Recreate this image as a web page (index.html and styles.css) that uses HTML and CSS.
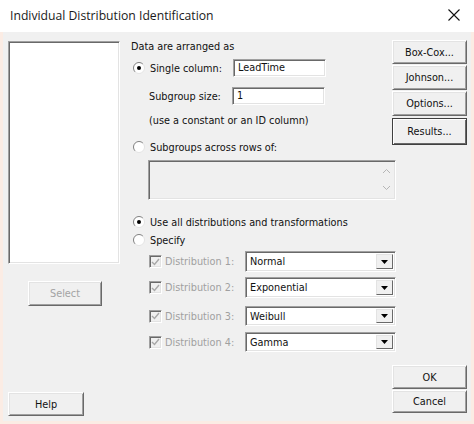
FILE: index.html
```html
<!DOCTYPE html>
<html>
<head>
<meta charset="utf-8">
<link rel="stylesheet" href="styles.css">
</head>
<body>
<div class="window">
  <div class="titlebar">
    <span class="title">Individual Distribution Identification</span>
    <svg class="close" width="12" height="12" viewBox="0 0 12 12"><path d="M0.5 0.5 L11.5 11.5 M11.5 0.5 L0.5 11.5" stroke="#111" stroke-width="1.1" fill="none"/></svg>
  </div>
  <div class="body">
    <div class="col-left">
      <div class="listbox"></div>
      <div class="btn btn-select disabled">Select</div>
      <div class="spacer"></div>
      <div class="btn btn-help">Help</div>
    </div>
    <div class="col-mid">
      <div class="line r-data">Data are arranged as</div>
      <div class="row r-single">
        <svg class="radio" width="12" height="12" viewBox="0 0 12 12"><circle cx="6" cy="6" r="5.5" fill="#fff"/><path d="M2.1 9.9 A5.5 5.5 0 0 1 9.9 2.1" stroke="#808080" fill="none"/><path d="M9.9 2.1 A5.5 5.5 0 0 1 2.1 9.9" stroke="#e3e3e3" fill="none"/><circle cx="6" cy="6" r="2" fill="#000"/></svg>
        <span class="lbl">Single column:</span>
        <div class="edit">LeadTime</div>
      </div>
      <div class="row r-sub">
        <span class="lbl ind">Subgroup size:</span>
        <div class="edit">1</div>
      </div>
      <div class="line ind r-use">(use a constant or an ID column)</div>
      <div class="row r-across">
        <svg class="radio" width="12" height="12" viewBox="0 0 12 12"><circle cx="6" cy="6" r="5.5" fill="#fff"/><path d="M2.1 9.9 A5.5 5.5 0 0 1 9.9 2.1" stroke="#808080" fill="none"/><path d="M9.9 2.1 A5.5 5.5 0 0 1 2.1 9.9" stroke="#e3e3e3" fill="none"/></svg>
        <span>Subgroups across rows of:</span>
      </div>
      <div class="textarea">
        <div class="scroll">
          <svg width="9" height="6" viewBox="0 0 9 6"><path d="M1 5 L4.5 1.5 L8 5" stroke="#b5b5b5" fill="none"/></svg>
          <svg width="9" height="6" viewBox="0 0 9 6"><path d="M1 1 L4.5 4.5 L8 1" stroke="#b5b5b5" fill="none"/></svg>
        </div>
      </div>
      <div class="row r-all">
        <svg class="radio" width="12" height="12" viewBox="0 0 12 12"><circle cx="6" cy="6" r="5.5" fill="#fff"/><path d="M2.1 9.9 A5.5 5.5 0 0 1 9.9 2.1" stroke="#808080" fill="none"/><path d="M9.9 2.1 A5.5 5.5 0 0 1 2.1 9.9" stroke="#e3e3e3" fill="none"/><circle cx="6" cy="6" r="2" fill="#000"/></svg>
        <span>Use all distributions and transformations</span>
      </div>
      <div class="row r-spec">
        <svg class="radio" width="12" height="12" viewBox="0 0 12 12"><circle cx="6" cy="6" r="5.5" fill="#fff"/><path d="M2.1 9.9 A5.5 5.5 0 0 1 9.9 2.1" stroke="#808080" fill="none"/><path d="M9.9 2.1 A5.5 5.5 0 0 1 2.1 9.9" stroke="#e3e3e3" fill="none"/></svg>
        <span>Specify</span>
      </div>
      <div class="row dist d1">
        <span class="check"><svg width="9" height="8" viewBox="0 0 9 8"><path d="M1 4 L3.5 6.5 L8 1" stroke="#a8a8a8" stroke-width="1.4" fill="none"/></svg></span>
        <span class="dlbl">Distribution 1:</span>
        <div class="combo"><span class="cval">Normal</span><span class="cbtn"><svg width="7" height="4" viewBox="0 0 7 4"><path d="M0 0 H7 L3.5 4 Z" fill="#000"/></svg></span></div>
      </div>
      <div class="row dist d2">
        <span class="check"><svg width="9" height="8" viewBox="0 0 9 8"><path d="M1 4 L3.5 6.5 L8 1" stroke="#a8a8a8" stroke-width="1.4" fill="none"/></svg></span>
        <span class="dlbl">Distribution 2:</span>
        <div class="combo"><span class="cval">Exponential</span><span class="cbtn"><svg width="7" height="4" viewBox="0 0 7 4"><path d="M0 0 H7 L3.5 4 Z" fill="#000"/></svg></span></div>
      </div>
      <div class="row dist d3">
        <span class="check"><svg width="9" height="8" viewBox="0 0 9 8"><path d="M1 4 L3.5 6.5 L8 1" stroke="#a8a8a8" stroke-width="1.4" fill="none"/></svg></span>
        <span class="dlbl">Distribution 3:</span>
        <div class="combo"><span class="cval">Weibull</span><span class="cbtn"><svg width="7" height="4" viewBox="0 0 7 4"><path d="M0 0 H7 L3.5 4 Z" fill="#000"/></svg></span></div>
      </div>
      <div class="row dist d4">
        <span class="check"><svg width="9" height="8" viewBox="0 0 9 8"><path d="M1 4 L3.5 6.5 L8 1" stroke="#a8a8a8" stroke-width="1.4" fill="none"/></svg></span>
        <span class="dlbl">Distribution 4:</span>
        <div class="combo"><span class="cval">Gamma</span><span class="cbtn"><svg width="7" height="4" viewBox="0 0 7 4"><path d="M0 0 H7 L3.5 4 Z" fill="#000"/></svg></span></div>
      </div>
    </div>
    <div class="col-right">
      <div class="btn rb b-box">Box-Cox...</div>
      <div class="btn rb b-john">Johnson...</div>
      <div class="btn rb b-opt">Options...</div>
      <div class="btn rb b-res default">Results...</div>
      <div class="spacer"></div>
      <div class="btn rb b-ok">OK</div>
      <div class="btn rb b-cancel">Cancel</div>
    </div>
  </div>
</div>
</body>
</html>
```

FILE: styles.css
```css
* { box-sizing: border-box; }
html, body { margin: 0; padding: 0; }
body {
  width: 474px;
  height: 424px;
  overflow: hidden;
  background: #fbece4;
  font-family: "DejaVu Sans Condensed", "Liberation Sans", Arial, sans-serif;
  font-size: 10.8px;
  color: #111;
}
.window {
  width: 474px;
  height: 424px;
  display: flex;
  flex-direction: column;
}
.titlebar {
  height: 32px;
  background: #fff;
  display: flex;
  align-items: center;
  padding: 0 14px 0 10px;
  flex: none;
}
.title {
  font-family: "Open Sans", "Noto Sans", sans-serif;
  font-size: 12.2px;
  color: #1a1a1a;
  flex: 1;
  padding-bottom: 2px;
}
.close { display: block; margin-bottom: 2px; }
.body {
  flex: 1;
  background: #f0f0f0;
  margin: 0 3px 3px 3px;
  display: flex;
  padding: 8px 0 0 5px;
}
.col-left {
  width: 112px;
  display: flex;
  flex-direction: column;
  padding-top: 1px;
  padding-bottom: 5px;
}
.listbox {
  width: 112px;
  height: 223px;
  background: #fff;
  border-top: 1px solid #a0a0a0;
  border-left: 1px solid #a0a0a0;
  border-right: 1px solid #fff;
  border-bottom: 1px solid #fff;
  box-shadow: inset 1px 1px 0 #696969, inset -1px -1px 0 #e3e3e3;
}
.spacer { flex: 1; }
.btn {
  display: flex;
  align-items: center;
  justify-content: center;
  background: #f0f0f0;
  border-top: 1px solid #fff;
  border-left: 1px solid #fff;
  border-right: 1px solid #696969;
  border-bottom: 1px solid #696969;
  box-shadow: inset 1px 1px 0 #e3e3e3, inset -1px -1px 0 #a0a0a0;
  color: #111;
}
.btn.disabled { color: #a3a3a3; }
.btn-select {
  width: 74px;
  height: 25px;
  margin: 17px 0 0 20px;
}
.btn-help {
  width: 76px;
  height: 24px;
}
.col-mid {
  width: 265px;
  margin-left: 11px;
  display: flex;
  flex-direction: column;
}
.line { height: 14px; line-height: 14px; white-space: nowrap; }
.row { display: flex; align-items: center; white-space: nowrap; }
.radio { flex: none; margin: 0 5px 0 2px; display: block; }
.ind { margin-left: 18px; }
.lbl { width: 83px; }
.lbl.ind { width: 83px; margin-left: 18px; }
.edit {
  width: 93px;
  height: 18px;
  background: #fff;
  border-top: 1px solid #a0a0a0;
  border-left: 1px solid #a0a0a0;
  border-right: 1px solid #fff;
  border-bottom: 1px solid #fff;
  box-shadow: inset 1px 1px 0 #696969, inset -1px -1px 0 #e3e3e3;
  padding-left: 4px;
  line-height: 16px;
}
.r-data { margin-top: 0; }
.r-single { height: 18px; margin-top: 5px; }
.r-sub { height: 18px; margin-top: 10px; }
.r-use { margin-top: 9px; }
.r-across { height: 14px; margin-top: 12px; }
.textarea {
  margin: 6px 0 0 17px;
  width: 248px;
  height: 40px;
  background: #f0f0f0;
  border-top: 1px solid #a0a0a0;
  border-left: 1px solid #a0a0a0;
  border-right: 1px solid #fff;
  border-bottom: 1px solid #fff;
  box-shadow: inset 1px 1px 0 #696969, inset -1px -1px 0 #e3e3e3;
  display: flex;
  justify-content: flex-end;
}
.scroll {
  width: 18px;
  display: flex;
  flex-direction: column;
  align-items: center;
  justify-content: space-between;
  padding: 7px 0 8px;
}
.scroll svg { display: block; }
.r-all { height: 14px; margin-top: 15px; }
.r-spec { height: 14px; margin-top: 4px; }
.dist { height: 21px; }
.d1 { margin-top: 4px; }
.d2 { margin-top: 5px; }
.d3 { margin-top: 8px; height: 20px; }
.d4 { margin-top: 6px; height: 20px; }
.check {
  flex: none;
  width: 13px;
  height: 13px;
  margin-left: 18px;
  background: #f0f0f0;
  border-top: 1px solid #a0a0a0;
  border-left: 1px solid #a0a0a0;
  border-right: 1px solid #fff;
  border-bottom: 1px solid #fff;
  box-shadow: inset 1px 1px 0 #696969, inset -1px -1px 0 #e3e3e3;
  display: flex;
  align-items: center;
  justify-content: center;
}
.check svg { display: block; }
.dlbl { color: #a0a0a0; width: 83px; padding-left: 3px; flex: none; }
.combo {
  width: 151px;
  flex: none;
  height: 100%;
  background: #fff;
  border-top: 1px solid #a0a0a0;
  border-left: 1px solid #a0a0a0;
  border-right: 1px solid #fff;
  border-bottom: 1px solid #fff;
  box-shadow: inset 1px 1px 0 #696969, inset -1px -1px 0 #e3e3e3;
  display: flex;
  align-items: center;
  padding: 2px;
}
.cval { flex: 1; padding-left: 2px; }
.cbtn {
  width: 17px;
  height: 100%;
  background: #f0f0f0;
  border-top: 1px solid #e3e3e3;
  border-left: 1px solid #e3e3e3;
  border-right: 1px solid #696969;
  border-bottom: 1px solid #696969;
  display: flex;
  align-items: center;
  justify-content: center;
}
.cbtn svg { display: block; }
.col-right {
  width: 75px;
  margin-left: -4px;
  display: flex;
  flex-direction: column;
  padding-bottom: 8px;
}
.rb { width: 75px; height: 24px; flex: none; }
.b-john { margin-top: 1px; height: 25px; }
.b-opt { margin-top: 1px; height: 25px; }
.b-res {
  margin-top: 2px;
  height: 27px;
  border: 1px solid #404040;
  box-shadow: inset 1px 1px 0 #fff, inset -1px -1px 0 #696969;
}
.b-ok { height: 24px; }
.b-cancel { margin-top: 1px; height: 23px; }
```
